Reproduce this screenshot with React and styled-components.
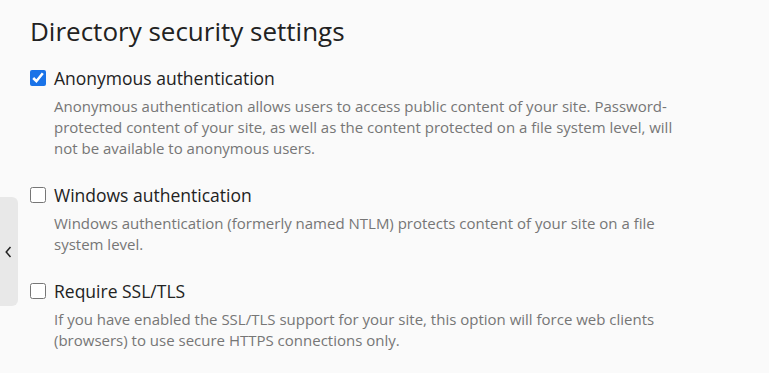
import React from 'react';
import styled, { createGlobalStyle } from 'styled-components';

const GlobalStyle = createGlobalStyle`
  html, body {
    margin: 0;
    padding: 0;
    background: #fafafa;
    font-family: "Open Sans", "Noto Sans", sans-serif;
  }
`

const Page = styled.div`
  position: relative;
  min-height: 373px;
  padding: 14px 30px 0 30px;
  box-sizing: border-box;
`

const Title = styled.h1`
  margin: 0 0 18px 0;
  font-size: 26px;
  line-height: 34px;
  font-weight: 400;
  color: #222;
`

const Option = styled.div`
  display: flex;
  flex-direction: column;
  margin-bottom: 24px;
`

const OptionLabel = styled.label`
  display: flex;
  align-items: center;
  gap: 8px;
  font-size: 17.5px;
  line-height: 24px;
  color: #222;
  cursor: pointer;
`

const Check = styled.input.attrs({ type: 'checkbox' })`
  width: 16px;
  height: 16px;
  margin: 0;
  accent-color: #1a73e8;
`

const Description = styled.p`
  margin: 6px 0 0 24px;
  max-width: 625px;
  font-size: 15px;
  line-height: 21px;
  color: #767676;
`

const SideTab = styled.button`
  position: absolute;
  left: 0;
  top: 197px;
  width: 18px;
  height: 109px;
  border: none;
  padding: 0 2px 0 0;
  background: #e8e8e8;
  border-radius: 0 6px 6px 0;
  display: flex;
  align-items: center;
  justify-content: center;
  cursor: pointer;
`

const options = [
  {
    label: 'Anonymous authentication',
    checked: true,
    text: 'Anonymous authentication allows users to access public content of your site. Password-protected content of your site, as well as the content protected on a file system level, will not be available to anonymous users.',
  },
  {
    label: 'Windows authentication',
    checked: false,
    text: 'Windows authentication (formerly named NTLM) protects content of your site on a file system level.',
  },
  {
    label: 'Require SSL/TLS',
    checked: false,
    text: 'If you have enabled the SSL/TLS support for your site, this option will force web clients (browsers) to use secure HTTPS connections only.',
  },
]

export default function App() {
  return (
    <>
      <GlobalStyle />
      <Page>
        <SideTab aria-label="Collapse">
          <svg width="7" height="12" viewBox="0 0 7 12">
            <path d="M5.5 1 L1.2 6 L5.5 11" fill="none" stroke="#222" strokeWidth="1.5" />
          </svg>
        </SideTab>
        <Title>Directory security settings</Title>
        {options.map((o) => (
          <Option key={o.label}>
            <OptionLabel>
              <Check defaultChecked={o.checked} />
              {o.label}
            </OptionLabel>
            <Description>{o.text}</Description>
          </Option>
        ))}
      </Page>
    </>
  )
}
